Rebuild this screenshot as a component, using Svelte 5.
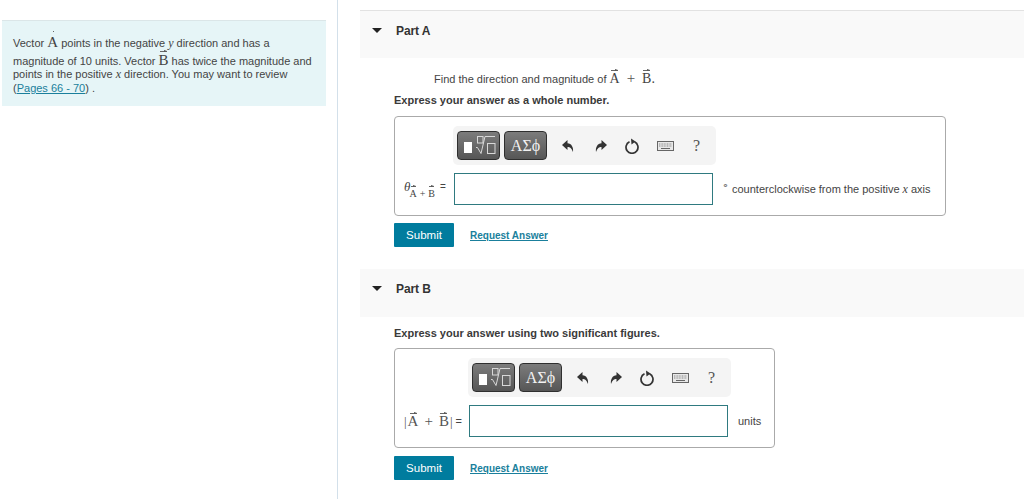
<script>
  const parts = [
    {
      name: 'Part A',
      express: 'Express your answer as a whole number.',
      find: true,
      width: 552,
    },
    {
      name: 'Part B',
      express: 'Express your answer using two significant figures.',
      find: false,
      width: 381,
    },
  ];
</script>

{#snippet vec(l, kind = '')}
  <span class="vec {kind}">{l}<span class="arrow"></span></span>
{/snippet}

{#snippet toolbar()}
  <div class="toolbar">
    <button class="tplbtn" aria-label="templates">
      <svg width="41" height="27" viewBox="0 0 41 27">
        <rect x="6" y="10" width="8" height="11" fill="#fff" />
        <rect x="19.500" y="4.500" width="5.500" height="6.500" fill="none" stroke="#d8d8d8" />
        <path d="M18 15.500h1.500l3.500 6 4-17h10" fill="none" stroke="#d8d8d8" stroke-width="1" />
        <rect x="29.500" y="11.500" width="7.500" height="10" fill="none" stroke="#d8d8d8" />
      </svg>
    </button>
    <button class="symbtn">ΑΣϕ</button>
    <svg class="ic undo" width="14" height="14" viewBox="0 0 14 14">
      <path d="M6.500 1L1 6l5.500 5V8c2.500 0 4 1 5.500 5 .6-5-1.500-8.500-5.500-8.800z" fill="#333" />
    </svg>
    <svg class="ic redo" width="14" height="14" viewBox="0 0 14 14">
      <path d="M7.500 1L13 6l-5.500 5V8C5 8 3.500 9 2 13 1.400 8 3.500 4.500 7.500 4.200z" fill="#333" />
    </svg>
    <svg class="ic reset" width="16" height="16" viewBox="0 0 16 16">
      <path d="M5.500 3.800A6 6 0 1 0 10.500 3.800" fill="none" stroke="#333" stroke-width="1.700" />
      <path d="M7 .5L11.500 3.500 7.500 6.500z" fill="#333" />
    </svg>
    <svg class="ic kbd" width="17" height="10" viewBox="0 0 17 10">
      <rect x=".5" y=".5" width="16" height="9" fill="#e8e8e8" stroke="#666" />
      <path d="M2 3h13M2 5h13" stroke="#888" stroke-dasharray="1 .6" />
      <path d="M4 7.500h9" stroke="#666" />
    </svg>
    <span class="help">?</span>
  </div>
{/snippet}

<div class="page">
  <aside class="left">
    <div class="intro">
      <p>
        Vector {@render vec('A', 'dot')} points in the negative <i class="m">y</i> direction and has a
        magnitude of 10 units. Vector {@render vec('B', 'tall')} has twice the magnitude and
        points in the positive <i class="m">x</i> direction. You may want to review
        (<a href="#p">Pages 66 - 70</a>) .
      </p>
    </div>
  </aside>

  <main class="right">
    {#each parts as part, i}
      <section class="part" class:first={i === 0}>
        <header class="head">
          <span class="tri"></span>
          <h2>{part.name}</h2>
        </header>
        <div class="body">
          {#if part.find}
            <p class="find">
              Find the direction and magnitude of
              <span class="mth">{@render vec('A')}<span class="plus">+</span>{@render vec('B')}.</span>
            </p>
          {/if}
          <p class="express" class:lone={!part.find}>{part.express}</p>

          <div class="answer" style="width:{part.width}px">
            <div class="indent" class:b={!part.find}>
              {@render toolbar()}
            </div>
            <div class="row">
              {#if part.find}
                <span class="label a">
                  <span class="theta">θ<span class="sub">{@render vec('A')}<span class="splus">+</span>{@render vec('B')}</span></span>
                  <span class="eq">=</span>
                </span>
              {:else}
                <span class="label b">
                  <span class="mth small">|{@render vec('A')}<span class="plus">+</span>{@render vec('B')}|</span>
                  <span class="eq2">=</span>
                </span>
              {/if}
              <div class="input"></div>
              {#if part.find}
                <span class="unit"><sup>∘</sup><span class="ut">counterclockwise from the positive <i class="m">x</i> axis</span></span>
              {:else}
                <span class="unit"><span class="ut">units</span></span>
              {/if}
            </div>
          </div>

          <div class="actions" class:lower={!part.find}>
            <button class="submit">Submit</button>
            <a class="req" href="#r">Request Answer</a>
          </div>
        </div>
      </section>
    {/each}
  </main>
</div>

<style>
  :global(body) {
    margin: 0;
    background: #fff;
  }
  .page {
    display: flex;
    height: 499px;
    overflow: hidden;
    font-family: "Liberation Sans", Arial, sans-serif;
    color: #444;
  }
  .left {
    width: 338px;
    flex: none;
    box-sizing: border-box;
    border-right: 1px solid #d3e0ea;
    padding: 20px 11px 0 2px;
    height: 499px;
  }
  .intro {
    background: #e6f5f7;
    border-top: 1px solid #dbe6e8;
    box-sizing: border-box;
    height: 86px;
    padding: 15px 10px 0 11px;
    font-size: 11px;
    line-height: 13.500px;
  }
  .intro p {
    margin: 0;
  }
  a {
    color: #1a7f9c;
  }
  .m {
    font-family: "Liberation Serif", serif;
    font-size: 12px;
  }
  .vec {
    position: relative;
    display: inline-block;
    font-family: "Liberation Serif", serif;
    font-size: 15px;
    line-height: 13px;
  }
  .vec.tall {
    padding-top: 3px;
  }
  .arrow {
    position: absolute;
    left: 50%;
    top: -2px;
    width: 7px;
    margin-left: -3.500px;
    border-top: 1px solid #666;
  }
  .tall .arrow {
    top: 0;
  }
  .arrow::after {
    content: "";
    position: absolute;
    right: 0;
    top: -2px;
    border-left: 3px solid #555;
    border-top: 1.500px solid transparent;
    border-bottom: 1.500px solid transparent;
  }
  .dot .arrow {
    width: 1px;
    height: 1px;
    margin-left: 0;
    top: -5px;
    border: 0;
    background: #666;
  }
  .dot .arrow::after {
    display: none;
  }
  .right {
    flex: 1;
    padding: 10px 0 0 22px;
    min-width: 0;
  }
  .head {
    height: 48px;
    box-sizing: border-box;
    background: #f9f9f9;
    display: flex;
    align-items: flex-start;
    padding: 13px 0 0 12px;
  }
  .first .head {
    border-top: 1px solid #e2e2e2;
  }
  .tri {
    width: 0;
    height: 0;
    margin-top: 4px;
    border-left: 5px solid transparent;
    border-right: 5px solid transparent;
    border-top: 5.500px solid #222;
  }
  h2 {
    margin: 0 0 0 14px;
    font-size: 12px;
    line-height: 14px;
    font-weight: bold;
    color: #333;
    letter-spacing: -0.1px;
  }
  .body {
    padding: 0 0 0 34px;
  }
  .find {
    margin: 0;
    padding: 11px 0 0 40px;
    height: 22px;
    font-size: 11px;
    line-height: 18px;
    white-space: nowrap;
  }
  .find .vec {
    font-size: 14px;
  }
  .mth {
    font-family: "Liberation Serif", serif;
    font-size: 14px;
  }
  .mth.small {
    color: #555;
    font-size: 13px;
  }
  .mth.small .plus {
    margin: 0 5px;
  }
  .mth.small .vec {
    margin: 0 1px;
  }
  .plus {
    font-family: "Liberation Serif", serif;
    font-size: 15px;
    margin: 0 7px;
    color: #555;
  }
  .express {
    margin: 2px 0 0;
    height: 23px;
    font-size: 11px;
    line-height: 14px;
    font-weight: bold;
    color: #3a3a3a;
  }
  .express.lone {
    margin-top: 9px;
    height: 22px;
  }
  .answer {
    box-sizing: border-box;
    height: 100px;
    border: 1px solid #aaa;
    border-radius: 4px;
    padding: 9px 0 0;
  }
  .indent {
    padding-left: 58px;
  }
  .indent.b {
    padding-left: 73px;
  }
  .toolbar {
    display: flex;
    align-items: center;
    box-sizing: border-box;
    width: 263px;
    height: 39px;
    background: #f4f4f4;
    border-radius: 5px;
    padding-left: 4px;
  }
  .tplbtn,
  .symbtn {
    box-sizing: border-box;
    width: 43px;
    height: 29px;
    padding: 0;
    border: 1px solid #2f2f2f;
    border-radius: 4px;
    background: linear-gradient(#7c7c7c, #565656);
    display: flex;
    align-items: center;
    justify-content: center;
    color: #f2f2f2;
    font-family: "Liberation Serif", serif;
    font-size: 16px;
  }
  .symbtn {
    margin-left: 4px;
  }
  .ic {
    flex: none;
  }
  .undo {
    margin-left: 14px;
  }
  .redo {
    margin-left: 19px;
  }
  .reset {
    margin-left: 16px;
  }
  .kbd {
    margin-left: 17px;
  }
  .help {
    margin-left: 19px;
    font-family: "Liberation Serif", serif;
    font-size: 16px;
    color: #555;
  }
  .row {
    display: flex;
    align-items: flex-start;
    margin-top: 8px;
  }
  .label {
    box-sizing: border-box;
    flex: none;
    height: 32px;
    display: flex;
    align-items: center;
    padding-left: 9px;
    color: #444;
  }
  .label.a {
    width: 59px;
  }
  .label.b {
    width: 74px;
  }
  .theta {
    font-family: "Liberation Serif", serif;
    font-style: italic;
    font-size: 13px;
    position: relative;
    top: -2px;
    white-space: nowrap;
  }
  .sub {
    font-style: normal;
    position: relative;
    top: 6px;
    left: -1px;
  }
  .sub .vec {
    font-size: 10px;
  }
  .sub .arrow {
    width: 5px;
    margin-left: -2.500px;
    top: -1px;
  }
  .splus {
    font-size: 10px;
    margin: 0 3px;
  }
  .eq {
    font-size: 10px;
    margin-left: 4px;
    position: relative;
    top: -3px;
  }
  .eq2 {
    font-size: 11px;
    margin-left: 3px;
  }
  .input {
    box-sizing: border-box;
    width: 259px;
    height: 32px;
    flex: none;
    border: 1px solid #2f7a80;
    background: #fff;
  }
  .unit {
    height: 32px;
    display: flex;
    align-items: center;
    margin-left: 9px;
    font-size: 11px;
    color: #444;
    white-space: nowrap;
  }
  .unit sup {
    font-family: "Liberation Serif", serif;
    font-size: 11px;
    margin: -8px 2px 0 0;
    color: #777;
  }
  .unit .ut {
    margin-left: 1px;
  }
  .actions {
    display: flex;
    align-items: center;
    margin-top: 7px;
    height: 24px;
  }
  .actions.lower {
    margin-top: 8px;
  }
  .submit {
    box-sizing: border-box;
    width: 60px;
    height: 24px;
    padding: 0;
    border: 0;
    border-radius: 1px;
    background: #007c9e;
    color: #fff;
    font-family: "Liberation Sans", Arial, sans-serif;
    font-size: 11.500px;
  }
  .req {
    margin-left: 16px;
    font-size: 10px;
    font-weight: bold;
  }
  .part + .part {
    margin-top: 22px;
  }
</style>
